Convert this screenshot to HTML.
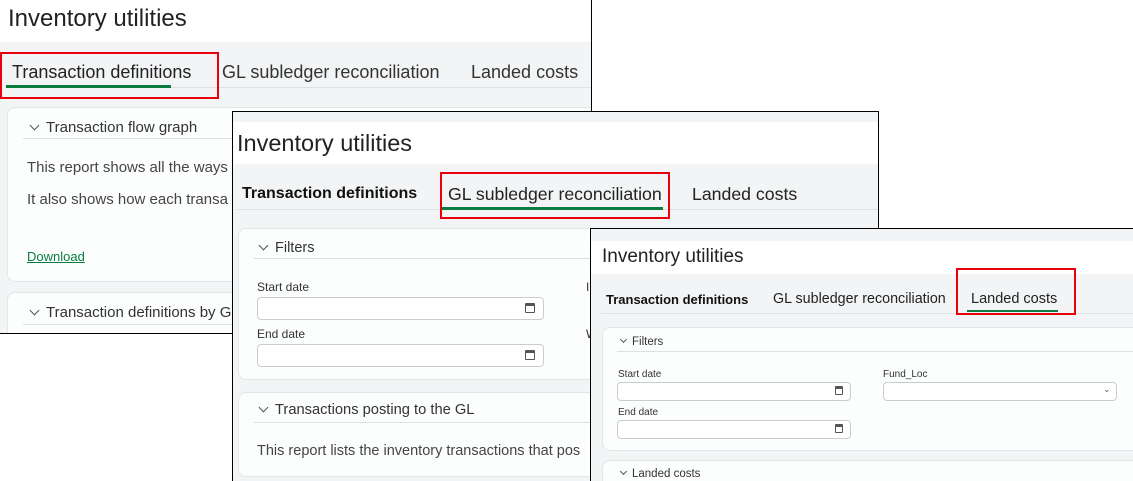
<!DOCTYPE html>
<html><head><meta charset="utf-8"><style>
*{margin:0;padding:0;box-sizing:border-box}
html,body{width:1133px;height:481px;overflow:hidden}
body{background:#fff;position:relative;font-family:"Liberation Sans",Arial,sans-serif;color:#222}
.p{position:absolute;overflow:hidden;background:#f2f4f5}
.a{position:absolute;white-space:nowrap}
.hdr{position:absolute;left:0;right:0;background:#fff}
.line{position:absolute;height:1px;background:#dde1e4}
.card{position:absolute;background:#fcfdfd;border:1px solid #e3e6e8;border-radius:8px}
.red{position:absolute;border:2px solid #e8000b}
.grn{position:absolute;height:3px;background:#0a7c3e}
.inp{position:absolute;background:#fff;border:1px solid #c9cdd1;border-radius:4px}
.cal{position:absolute;width:10px;height:10px;border:1.5px solid #555;border-top-width:3px;border-radius:1px}
.chev{display:inline-block;width:7px;height:7px;border-right:1.3px solid #555;border-bottom:1.3px solid #555;transform:rotate(45deg);margin-right:8px;position:relative;top:-3px}
</style></head><body>

<!-- Panel 1 -->
<div class="p" style="left:0;top:0;width:592px;height:334px;border-right:1px solid #000;border-bottom:1px solid #000">
  <div class="hdr" style="top:0;height:42px"></div>
  <div class="a" style="left:8px;top:5px;font-size:24px;color:#222">Inventory utilities</div>
  <div class="a" style="left:12px;top:62px;font-size:18px;color:#222">Transaction definitions</div>
  <div class="a" style="left:222px;top:62px;font-size:18px;color:#333">GL subledger reconciliation</div>
  <div class="a" style="left:471px;top:62px;font-size:18px;color:#333">Landed costs</div>
  <div class="line" style="left:5px;right:0;top:87px"></div>
  <div class="grn" style="left:6px;top:85px;width:165px"></div>
  <div class="card" style="left:7px;top:107px;width:600px;height:175px"></div>
  <div class="a" style="left:31px;top:119px;font-size:15px;color:#333"><span class="chev"></span>Transaction flow graph</div>
  <div class="line" style="left:23px;right:0;top:138px"></div>
  <div class="a" style="left:27px;top:159px;font-size:15px;color:#444">This report shows all the ways</div>
  <div class="a" style="left:27px;top:191px;font-size:15px;color:#444">It also shows how each transa</div>
  <div class="a" style="left:27px;top:249px;font-size:13px;color:#0a7c3e;text-decoration:underline">Download</div>
  <div class="card" style="left:7px;top:292px;width:600px;height:60px"></div>
  <div class="a" style="left:31px;top:304px;font-size:15px;color:#333"><span class="chev"></span>Transaction definitions by G</div>
  <div class="line" style="left:23px;right:0;top:324px"></div>
</div>
<div class="red" style="left:0;top:52px;width:219px;height:47px"></div>

<!-- Panel 2 -->
<div class="p" style="left:232px;top:111px;width:647px;height:370px;border:1px solid #000;border-bottom:none">
  <div class="hdr" style="top:10px;height:42px"></div>
  <div class="a" style="left:4px;top:18px;font-size:23.5px;color:#222">Inventory utilities</div>
  <div class="a" style="left:9px;top:73px;font-size:16px;font-weight:bold;color:#111">Transaction definitions</div>
  <div class="a" style="left:215px;top:72px;font-size:17.7px;color:#222">GL subledger reconciliation</div>
  <div class="a" style="left:459px;top:72px;font-size:17.7px;color:#222">Landed costs</div>
  <div class="line" style="left:4px;right:0;top:97px"></div>
  <div class="grn" style="left:209px;top:95px;width:221px"></div>
  <div class="card" style="left:5px;top:116px;width:700px;height:152px"></div>
  <div class="a" style="left:27px;top:128px;font-size:14.5px;color:#333"><span class="chev"></span>Filters</div>
  <div class="line" style="left:21px;right:0;top:146px"></div>
  <div class="a" style="left:24px;top:168px;font-size:12px;color:#333">Start date</div>
  <div class="inp" style="left:24px;top:185px;width:287px;height:23px"></div>
  <div class="cal" style="left:292px;top:191px"></div>
  <div class="a" style="left:24px;top:215px;font-size:12px;color:#333">End date</div>
  <div class="inp" style="left:24px;top:232px;width:287px;height:23px"></div>
  <div class="cal" style="left:292px;top:238px"></div>
  <div class="a" style="left:353px;top:168px;font-size:12px;color:#333">I</div>
  <div class="a" style="left:353px;top:215px;font-size:12px;color:#333">W</div>
  <div class="card" style="left:5px;top:280px;width:700px;height:85px"></div>
  <div class="a" style="left:27px;top:290px;font-size:14.7px;color:#333"><span class="chev"></span>Transactions posting to the GL</div>
  <div class="line" style="left:21px;right:0;top:310px"></div>
  <div class="a" style="left:24px;top:331px;font-size:14.5px;color:#444">This report lists the inventory transactions that pos</div>
</div>
<div class="red" style="left:440px;top:172px;width:230px;height:47px"></div>

<!-- Panel 3 -->
<div class="p" style="left:590px;top:228px;width:543px;height:253px;border-left:1px solid #000;border-top:1px solid #000">
  <div class="hdr" style="top:12px;height:33px"></div>
  <div class="a" style="left:11px;top:17px;font-size:19px;color:#222">Inventory utilities</div>
  <div class="a" style="left:15px;top:63px;font-size:13px;font-weight:bold;color:#111">Transaction definitions</div>
  <div class="a" style="left:182px;top:62px;font-size:14.3px;color:#222">GL subledger reconciliation</div>
  <div class="a" style="left:380px;top:62px;font-size:14.5px;color:#222">Landed costs</div>
  <div class="line" style="left:10px;right:0;top:84px"></div>
  <div class="grn" style="left:376px;top:81px;width:91px;height:2px"></div>
  <div class="card" style="left:11px;top:98px;width:540px;height:124px"></div>
  <div class="a" style="left:30px;top:107px;font-size:11.5px;color:#333"><span class="chev" style="width:5px;height:5px;margin-right:6px"></span>Filters</div>
  <div class="line" style="left:26px;right:0;top:122px"></div>
  <div class="a" style="left:27px;top:140px;font-size:10px;color:#333">Start date</div>
  <div class="inp" style="left:26px;top:153px;width:234px;height:19px"></div>
  <div class="cal" style="left:244px;top:157px;width:8px;height:9px"></div>
  <div class="a" style="left:292px;top:140px;font-size:10px;color:#333">Fund_Loc</div>
  <div class="inp" style="left:292px;top:153px;width:234px;height:19px"></div>
  <div class="a" style="left:512px;top:155px;font-size:9px;color:#555">&#8964;</div>
  <div class="a" style="left:27px;top:178px;font-size:10px;color:#333">End date</div>
  <div class="inp" style="left:26px;top:191px;width:234px;height:19px"></div>
  <div class="cal" style="left:244px;top:195px;width:8px;height:9px"></div>
  <div class="card" style="left:11px;top:231px;width:540px;height:30px"></div>
  <div class="a" style="left:30px;top:239px;font-size:11.5px;color:#333"><span class="chev" style="width:5px;height:5px;margin-right:6px"></span>Landed costs</div>
</div>
<div class="red" style="left:956px;top:268px;width:120px;height:47px"></div>

</body></html>
